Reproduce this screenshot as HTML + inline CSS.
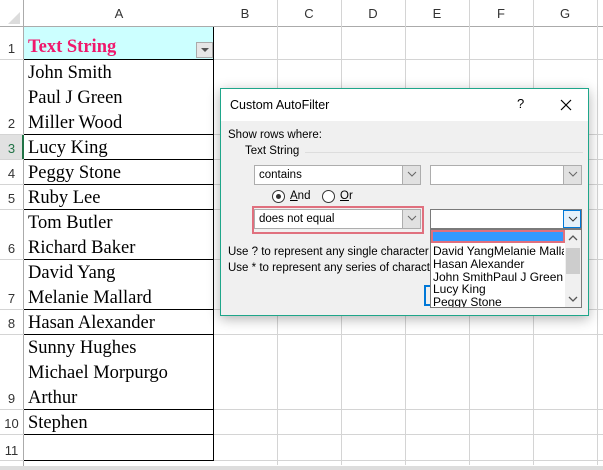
<!DOCTYPE html>
<html><head><style>
*{margin:0;padding:0;box-sizing:border-box}
body{width:603px;height:470px;background:#fff;position:relative;overflow:hidden;font-family:"Liberation Sans",sans-serif}
.a{position:absolute}
.vl{position:absolute;width:1px;background:#d4d4d4}
.hl{position:absolute;height:1px;background:#d4d4d4}
.rn{position:absolute;left:0;width:23px;text-align:center;font-size:13px;color:#333}
.ch{position:absolute;top:6px;font-size:13px;color:#333;text-align:center;width:64px}
.t{position:absolute;left:28px;font-family:"Liberation Serif",serif;font-size:18.5px;color:#000;line-height:25px}
.bk{position:absolute;left:24px;width:189px;height:1px;background:#000}
.dlg{font-family:"Liberation Sans",sans-serif;font-size:11.5px;color:#000}
.cb{position:absolute;background:#fff;border:1px solid #adadad;height:20px}
.btn{position:absolute;right:0;top:0;width:18px;height:18px;background:#e1e1e1;border-left:1px solid #adadad}
.chev{position:absolute;left:4px;top:3px}
</style></head><body>
<div class="a" style="left:0;top:0;width:603px;height:26px;background:#fff"></div>
<div class="a" style="left:0;top:26px;width:603px;height:1px;background:#ababab"></div>
<div class="a" style="left:23px;top:0;width:1px;height:470px;background:#ababab"></div>
<div class="a" style="left:8px;top:12px;width:0;height:0;border-left:12px solid transparent;border-bottom:12px solid #dcdcdc"></div>
<div class="ch" style="left:87px;width:64px">A</div>
<div class="ch" style="left:213px">B</div><div class="ch" style="left:277px">C</div><div class="ch" style="left:341px">D</div><div class="ch" style="left:405px">E</div><div class="ch" style="left:469px">F</div><div class="ch" style="left:533px">G</div>
<div class="vl" style="left:277px;top:0;height:465px"></div>
<div class="vl" style="left:341px;top:0;height:465px"></div>
<div class="vl" style="left:405px;top:0;height:465px"></div>
<div class="vl" style="left:469px;top:0;height:465px"></div>
<div class="vl" style="left:533px;top:0;height:465px"></div>
<div class="vl" style="left:597px;top:0;height:465px"></div>
<div class="hl" style="left:0;top:59px;width:603px"></div>
<div class="hl" style="left:0;top:134px;width:603px"></div>
<div class="hl" style="left:0;top:159px;width:603px"></div>
<div class="hl" style="left:0;top:184px;width:603px"></div>
<div class="hl" style="left:0;top:209px;width:603px"></div>
<div class="hl" style="left:0;top:259px;width:603px"></div>
<div class="hl" style="left:0;top:309px;width:603px"></div>
<div class="hl" style="left:0;top:334px;width:603px"></div>
<div class="hl" style="left:0;top:409px;width:603px"></div>
<div class="hl" style="left:0;top:434px;width:603px"></div>
<div class="hl" style="left:0;top:460px;width:603px"></div>
<div class="a" style="left:0;top:466px;width:603px;height:4px;background:#ddd"></div>
<div class="a" style="left:24px;top:27px;width:189px;height:32px;background:#ccffff"></div>
<div class="a" style="left:28px;top:37px;font-family:'Liberation Serif',serif;font-weight:bold;font-size:18.5px;color:#f0186c">Text String</div>
<div class="a" style="left:196px;top:42px;width:17px;height:16px;background:#e6e6e6;border:1px solid #aaa"></div>
<div class="a" style="left:201px;top:48px;border-left:4px solid transparent;border-right:4px solid transparent;border-top:4px solid #555"></div>
<div class="a" style="left:213px;top:27px;width:1px;height:434px;background:#000"></div>
<div class="bk" style="top:59px"></div><div class="bk" style="top:134px"></div><div class="bk" style="top:159px"></div><div class="bk" style="top:184px"></div><div class="bk" style="top:209px"></div><div class="bk" style="top:259px"></div><div class="bk" style="top:309px"></div><div class="bk" style="top:334px"></div><div class="bk" style="top:409px"></div><div class="bk" style="top:434px"></div><div class="bk" style="top:460px"></div>
<div class="a" style="left:0;top:135px;width:23px;height:24px;background:#e1e1e1"></div>
<div class="a" style="left:22px;top:135px;width:2px;height:24px;background:#217346"></div>
<div class="rn" style="top:41px">1</div><div class="rn" style="top:116px">2</div><div class="rn" style="top:141px;color:#217346">3</div><div class="rn" style="top:166px">4</div><div class="rn" style="top:191px">5</div><div class="rn" style="top:241px">6</div><div class="rn" style="top:291px">7</div><div class="rn" style="top:316px">8</div><div class="rn" style="top:391px">9</div><div class="rn" style="top:416px">10</div><div class="rn" style="top:443px">11</div>
<div class="t" style="top:61px">John Smith<br>Paul J Green<br>Miller Wood</div>
<div class="t" style="top:136px">Lucy King</div>
<div class="t" style="top:161px">Peggy Stone</div>
<div class="t" style="top:186px">Ruby Lee</div>
<div class="t" style="top:211px">Tom Butler<br>Richard Baker</div>
<div class="t" style="top:261px">David Yang<br>Melanie Mallard</div>
<div class="t" style="top:311px">Hasan Alexander</div>
<div class="t" style="top:336px">Sunny Hughes<br>Michael Morpurgo<br>Arthur</div>
<div class="t" style="top:411px">Stephen</div>
<div class="a dlg" style="left:220px;top:88px;width:369px;height:228px;background:#f0f0f0;border:1px solid #1ea68a;box-shadow:0 3px 12px rgba(0,0,0,.3)">
 <div class="a" style="left:0;top:0;width:367px;height:32px;background:#fff"></div>
 <div class="a" style="left:9px;top:9px;font-size:12.5px">Custom AutoFilter</div>
 <div class="a" style="left:296px;top:7px;font-size:13px">?</div>
 <svg class="a" style="left:339px;top:10px" width="12" height="12"><path d="M1 1L11 11M11 1L1 11" stroke="#000" stroke-width="1.2"/></svg>
 <div class="a" style="left:7px;top:40px">Show rows where:</div>
 <div class="a" style="left:24px;top:56px">Text String</div>
 <div class="a" style="left:84px;top:63px;width:278px;height:1px;background:#ddd"></div>
 <div class="cb" style="left:33px;top:76px;width:167px"><span class="a" style="left:4px;top:3px">contains</span><div class="btn"><svg class="chev" width="10" height="10"><path d="M1 3L5 7L9 3" stroke="#666" fill="none"/></svg></div></div>
 <div class="cb" style="left:209px;top:76px;width:152px"><div class="btn"><svg class="chev" width="10" height="10"><path d="M1 3L5 7L9 3" stroke="#666" fill="none"/></svg></div></div>
 <div class="a" style="left:51px;top:101px;width:13px;height:13px;border:1px solid #333;border-radius:50%;background:#fff"></div>
 <div class="a" style="left:55px;top:105px;width:5px;height:5px;border-radius:50%;background:#333"></div>
 <div class="a" style="left:69px;top:101px"><u>A</u>nd</div>
 <div class="a" style="left:101px;top:101px;width:13px;height:13px;border:1px solid #333;border-radius:50%;background:#fff"></div>
 <div class="a" style="left:119px;top:101px"><u>O</u>r</div>
 <div class="a" style="left:31px;top:117px;width:172px;height:28px;border:2px solid #e0707e"></div>
 <div class="cb" style="left:33px;top:120px;width:167px"><span class="a" style="left:4px;top:3px">does not equal</span><div class="btn"><svg class="chev" width="10" height="10"><path d="M1 3L5 7L9 3" stroke="#666" fill="none"/></svg></div></div>
 <div class="cb" style="left:209px;top:120px;width:152px;border-color:#7a7a7a"><div class="btn" style="background:#e5f1fb;border:1px solid #0078d7"><svg class="chev" width="10" height="10"><path d="M1 3L5 7L9 3" stroke="#333" fill="none"/></svg></div></div>
 <div class="a" style="left:7px;top:157px">Use ? to represent any single character</div>
 <div class="a" style="left:7px;top:173px;width:202px;overflow:hidden;white-space:nowrap">Use * to represent any series of characters</div>
 <div class="a" style="left:203px;top:196px;width:10px;height:21px;border:2px solid #0078d7;border-right:none"></div>
 <div class="a" style="left:209px;top:140px;width:152px;height:79px;background:#fff;border:1px solid #7a7a7a;overflow:hidden">
  <div class="a" style="left:0;top:0;width:134px;height:13px;background:#3399ff;border:2px solid #e0707e"></div>
  <div class="a" style="left:2px;top:15px;line-height:12.8px;white-space:nowrap;width:131px;overflow:hidden;font-size:12px">David YangMelanie Mallard<br>Hasan Alexander<br>John SmithPaul J GreenMiller<br>Lucy King<br>Peggy Stone</div>
  <div class="a" style="left:134px;top:0;width:16px;height:77px;background:#f0f0f0"></div>
  <div class="a" style="left:135px;top:18px;width:14px;height:26px;background:#cdcdcd"></div>
  <svg class="a" style="left:137px;top:4px" width="10" height="8"><path d="M1 6L5 2L9 6" stroke="#555" fill="none" stroke-width="1.3"/></svg>
  <svg class="a" style="left:137px;top:65px" width="10" height="8"><path d="M1 2L5 6L9 2" stroke="#555" fill="none" stroke-width="1.3"/></svg>
 </div>
</div>
</body></html>
